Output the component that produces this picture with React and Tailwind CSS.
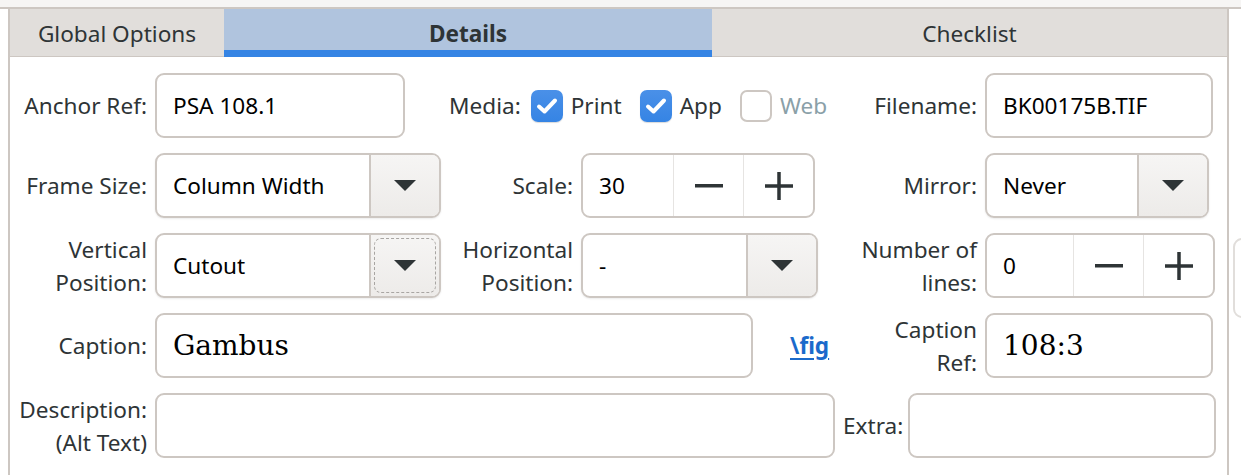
import React from "react";

function Triangle() {
  return (
    <svg width="24" height="12" viewBox="0 0 24 12">
      <path d="M1 0 L23 0 L12 11 Z" fill="#2e3436" />
    </svg>
  );
}

function Minus() {
  return (
    <svg width="28" height="4" viewBox="0 0 28 4">
      <rect x="0" y="0" width="28" height="3.5" fill="#2e3436" />
    </svg>
  );
}

function Plus() {
  return (
    <svg width="28" height="28" viewBox="0 0 28 28">
      <rect x="0" y="12.25" width="28" height="3.5" fill="#2e3436" />
      <rect x="12.25" y="0" width="3.5" height="28" fill="#2e3436" />
    </svg>
  );
}

function Label({ children }) {
  return (
    <div className="flex items-center justify-end text-right text-[#2e3436] leading-[33px] h-[65px]">
      <div>{children}</div>
    </div>
  );
}

function Entry({ value, className = "", serif }) {
  return (
    <div
      className={
        "h-[65px] rounded-[9px] border-2 border-[#cdc7c2] bg-white flex items-center px-[16px] text-black " +
        className
      }
    >
      <span className={serif ? "font-['DejaVu_Serif',serif] text-[28px]" : ""}>{value}</span>
    </div>
  );
}

function Combo({ value, className = "", focused }) {
  return (
    <div
      className={
        "h-[65px] rounded-[9px] border-2 border-[#cdc7c2] bg-white flex overflow-hidden shadow-[0_1px_2px_rgba(0,0,0,0.08)] " +
        className
      }
    >
      <div className="flex-1 flex items-center px-[16px] text-black">{value}</div>
      <div className="w-[70px] border-l-2 border-[#cdc7c2] bg-gradient-to-b from-[#f6f5f4] to-[#edebe9] flex items-center justify-center p-[3px]">
        {focused ? (
          <div className="w-full h-full rounded-[7px] border border-dashed border-[#a8a5a2] flex items-center justify-center">
            <Triangle />
          </div>
        ) : (
          <Triangle />
        )}
      </div>
    </div>
  );
}

function Spin({ value, className = "" }) {
  return (
    <div
      className={
        "h-[65px] rounded-[9px] border-2 border-[#cdc7c2] bg-white flex overflow-hidden " + className
      }
    >
      <div className="flex-1 flex items-center px-[16px] text-black">{value}</div>
      <div className="w-[70px] border-l border-[#e6e4e2] flex items-center justify-center">
        <Minus />
      </div>
      <div className="w-[70px] border-l border-[#e6e4e2] flex items-center justify-center">
        <Plus />
      </div>
    </div>
  );
}

function Check({ checked }) {
  if (!checked) {
    return <div className="w-[32px] h-[32px] rounded-[7px] border-2 border-[#cdc7c2] bg-white" />;
  }
  return (
    <div className="w-[32px] h-[32px] rounded-[7px] bg-gradient-to-b from-[#4a90e8] to-[#3584e4] flex items-center justify-center shadow-[0_1px_1px_rgba(0,0,0,0.15)]">
      <svg width="22" height="18" viewBox="0 0 22 18">
        <path d="M3 9.5 L8.5 14.5 L19 3.5" fill="none" stroke="white" strokeWidth="4" strokeLinecap="round" strokeLinejoin="round" />
      </svg>
    </div>
  );
}

export default function App() {
  return (
    <div className="w-[1241px] h-[475px] bg-white relative overflow-hidden font-['Noto_Sans',sans-serif] text-[22.6px]">
      <div className="h-[7px] bg-[#f6f5f4] border-b-2 border-[#cdc7c2] box-content" />
      <div className="ml-[8px] w-[1221px] h-[466px] border-x-2 border-[#cdc7c2]">
        {/* tabs */}
        <div className="flex h-[48px] bg-[#e1dedb] border-b border-[#cdc7c2] text-[#2e3436]">
          <div className="w-[214px] flex items-center justify-center pt-[2px]">Global Options</div>
          <div className="w-[488px] bg-[#b0c4de] font-bold flex items-center justify-center border-b-[7px] border-[#3584e4] -mb-px pt-[8px]">
            Details
          </div>
          <div className="flex-1 flex items-center justify-center pt-[2px]">Checklist</div>
        </div>

        {/* form */}
        <div className="pt-[16px] grid grid-cols-[137px_286px_124px_237px_151px_230px] gap-x-2 gap-y-[15px] auto-rows-[65px]">
          {/* row 1 */}
          <Label>Anchor Ref:</Label>
          <Entry value="PSA 108.1" className="w-[250px]" />
          <div className="col-span-2 flex items-center text-[#2e3436]">
            <span>Media:</span>
            <span className="ml-[10px]"><Check checked /></span>
            <span className="ml-[8px]">Print</span>
            <span className="ml-[18px]"><Check checked /></span>
            <span className="ml-[8px]">App</span>
            <span className="ml-[18px]"><Check /></span>
            <span className="ml-[8px] text-[#8aa0a8]">Web</span>
          </div>
          <Label>Filename:</Label>
          <Entry value="BK00175B.TIF" className="w-[228px]" />

          {/* row 2 */}
          <Label>Frame Size:</Label>
          <Combo value="Column Width" />
          <Label>Scale:</Label>
          <Spin value="30" className="w-[234px]" />
          <Label>Mirror:</Label>
          <Combo value="Never" className="w-[224px]" />

          {/* row 3 */}
          <Label>
            Vertical
            <br />
            Position:
          </Label>
          <Combo value="Cutout" focused />
          <Label>
            Horizontal
            <br />
            Position:
          </Label>
          <Combo value="-" />
          <Label>
            Number of
            <br />
            lines:
          </Label>
          <Spin value="0" />

          {/* row 4 */}
          <Label>Caption:</Label>
          <div className="col-span-3 flex items-center">
            <Entry value="Gambus" serif className="w-[598px] shrink-0" />
            <a className="ml-[37px] shrink-0 text-[#1b6acb] font-bold underline underline-offset-4 cursor-pointer">
              \fig
            </a>
          </div>
          <Label>
            Caption
            <br />
            Ref:
          </Label>
          <Entry value="108:3" serif className="w-[228px]" />

          {/* row 5 */}
          <Label>
            Description:
            <br />
            (Alt Text)
          </Label>
          <div className="col-span-5 flex items-center gap-2">
            <Entry value="" className="w-[680px] shrink-0" />
            <span className="w-[57px] text-right text-[#2e3436]">Extra:</span>
            <Entry value="" className="w-[308px] shrink-0" />
          </div>
        </div>
      </div>
      <div className="absolute left-[1233px] top-[238px] w-[40px] h-[80px] rounded-[9px] border-2 border-[#e1dedb]" />
    </div>
  );
}
